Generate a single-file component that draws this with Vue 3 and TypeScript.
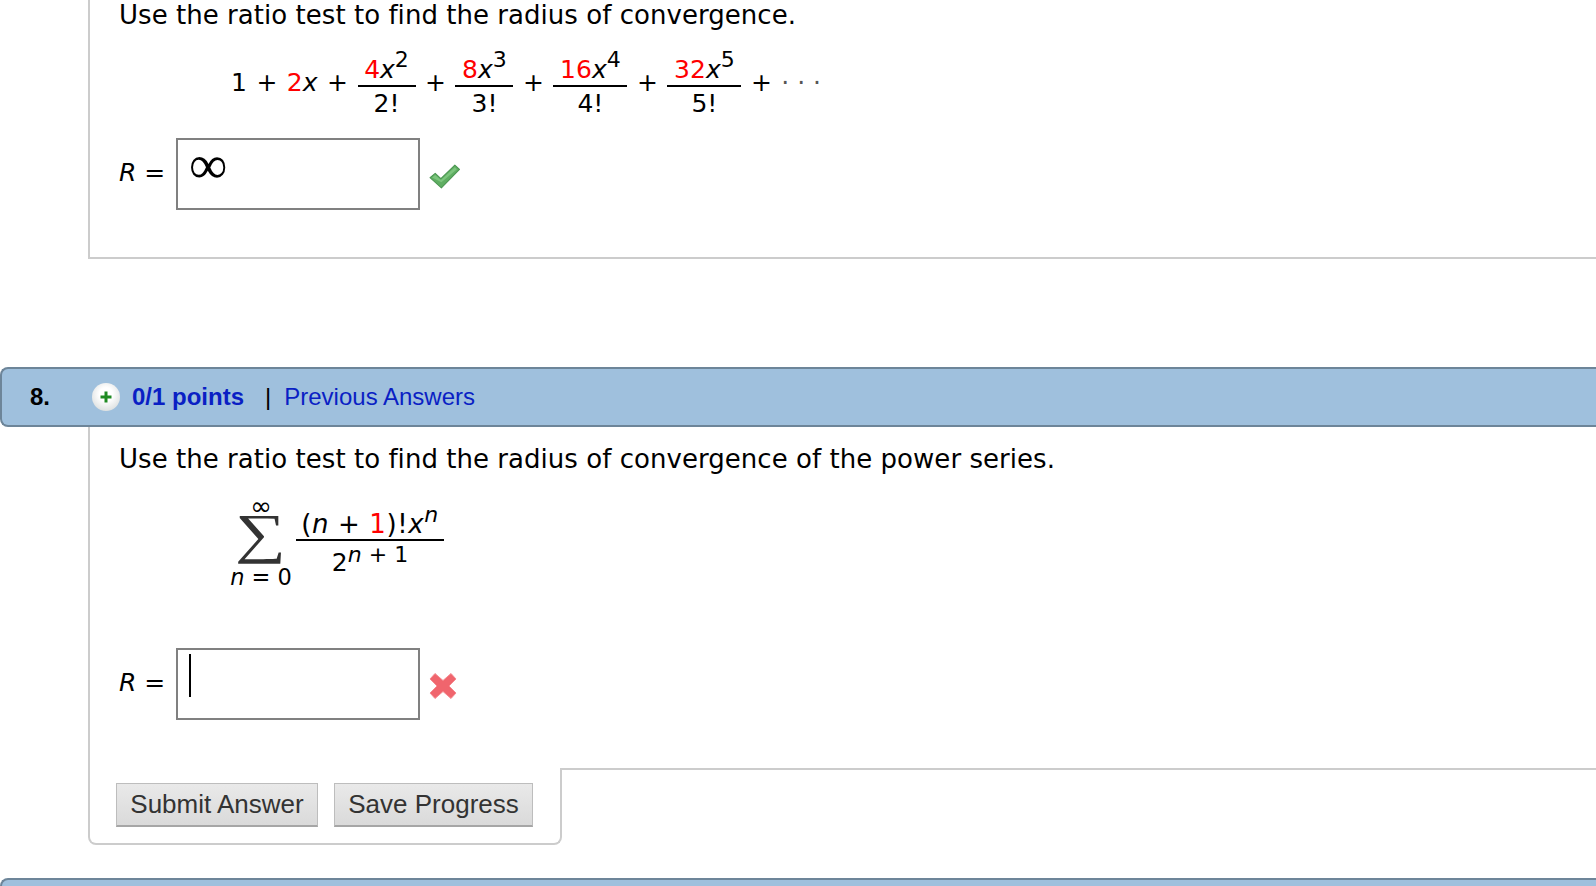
<script setup lang="ts">
interface Term { coef: string; exp: string; den: string; }
const terms: Term[] = [
  { coef: '4', exp: '2', den: '2!' },
  { coef: '8', exp: '3', den: '3!' },
  { coef: '16', exp: '4', den: '4!' },
  { coef: '32', exp: '5', den: '5!' },
];
</script>

<template>
  <div class="page">
    <section class="body first">
      <p class="prompt">Use the ratio test to find the radius of convergence.</p>
      <div class="math series">
        <span>1</span><span class="op">+</span><span><b class="red">2</b><i>x</i></span><span class="op">+</span>
        <template v-for="t in terms" :key="t.exp">
          <span class="frac" :class="'c' + t.coef.length">
            <span class="num"><b class="red">{{ t.coef }}</b><i>x</i><sup>{{ t.exp }}</sup></span>
            <span class="den">{{ t.den }}</span>
          </span>
          <span class="op">+</span>
        </template>
        <span class="dots">· · ·</span>
      </div>
      <div class="answer">
        <span class="math label"><i>R</i> =</span>
        <div class="box"><span class="inf">∞</span></div>
        <svg class="mark check" viewBox="0 0 30 24" width="31" height="25" aria-hidden="true">
          <path d="M1 13 L6 9 L11.5 14 L25 1 L29.5 5 L12 23 Z" fill="#5fae62" stroke="#4a9550" stroke-width="1" stroke-linejoin="round" />
          <path d="M3 13 L6 10.5 L11.5 15.5 L25 3 L27 5 L12 17.5 Z" fill="#7cc57d" />
        </svg>
      </div>
    </section>

    <header class="bar">
      <span class="qnum">8.</span>
      <span class="plus">
        <svg viewBox="0 0 12 12" width="12" height="12" aria-hidden="true"><path d="M4.5 0.5h3v4h4v3h-4v4h-3v-4h-4v-3h4z" fill="#1f8a22" /></svg>
      </span>
      <a class="points">0/1 points</a>
      <span class="sep">|</span>
      <a class="prev">Previous Answers</a>
    </header>

    <section class="second">
      <div class="body content">
        <p class="prompt">Use the ratio test to find the radius of convergence of the power series.</p>
        <div class="math sumrow">
          <span class="sum">
            <span class="sum-top">∞</span>
            <span class="sigma">∑</span>
            <span class="sum-bot"><i>n</i> = 0</span>
          </span>
          <span class="frac bigfrac">
            <span class="num"><span>(<i>n</i> + <b class="red">1</b>)!<i>x</i><sup><i>n</i></sup></span></span>
            <span class="den"><span>2<sup class="high"><i>n</i> + 1</sup></span></span>
          </span>
        </div>
        <div class="answer">
          <span class="math label"><i>R</i> =</span>
          <div class="box"><span class="caret"></span></div>
          <svg class="mark cross" viewBox="0 0 28 28" width="28" height="28" aria-hidden="true">
            <path d="M6 1.5 L14 8.5 L22 1.5 L27 7 L20 14 L27 21 L22 26.5 L14 19.5 L6 26.5 L1 21 L8 14 L1 7 Z" fill="#f0656d" stroke="#f58a90" stroke-width="1" stroke-linejoin="round" />
          </svg>
        </div>
      </div>
      <div class="footer">
        <div class="actions">
          <button class="btn submit" type="button">Submit Answer</button>
          <button class="btn save" type="button">Save Progress</button>
        </div>
        <div class="filler"></div>
      </div>
    </section>

    <div class="bar next"></div>
  </div>
</template>

<style>
html, body { margin: 0; padding: 0; background: #fff; overflow: hidden; }
</style>

<style scoped>
.page {
  width: 1596px;
  height: 886px;
  overflow: hidden;
  background: #fff;
  font-family: "DejaVu Sans", Verdana, sans-serif;
  color: #000;
}
.body {
  margin-left: 88px;
  border-left: 2px solid #ccc;
  padding-left: 29px;
}
.first {
  height: 257px;
  border-bottom: 2px solid #ccc;
  margin-bottom: 108px;
}
.prompt {
  margin: 0;
  font-size: 26px;
  letter-spacing: 0.04px;
  line-height: 30px;
}
.math { font-size: 25px; line-height: 30px; }
.math i { font-style: italic; }
.red { color: #f00; font-weight: normal; }
sup { font-size: 22px; line-height: 0; vertical-align: 11px; }
.series {
  display: flex;
  align-items: center;
  gap: 9.5px;
  margin: 17px 0 0 112px;
  height: 71px;
  white-space: nowrap;
}
.frac {
  display: inline-flex;
  flex-direction: column;
  align-items: center;
}
.series .frac { margin-top: 8px; }
.frac .num {
  border-bottom: 2px solid #000;
  line-height: 30px;
  align-self: stretch;
  text-align: center;
}
.frac .den { line-height: 30px; padding-top: 2px; }
.c1 { width: 58px; }
.c2 { width: 74px; }
.dots { color: #555; }
.answer {
  display: flex;
  align-items: center;
  margin-top: 20px;
}
.label { width: 57px; flex: none; white-space: nowrap; margin-top: -2px; }
.box {
  box-sizing: border-box;
  width: 244px;
  height: 72px;
  border: 2px solid #808080;
  padding: 4px 11px;
  background: #fff;
}
.inf {
  display: block;
  font-family: "Liberation Serif", serif;
  font-size: 54px;
  line-height: 42px;
}
.caret {
  display: block;
  width: 2px;
  height: 43px;
  background: #000;
}
.mark { margin-left: 9px; flex: none; }
.check { margin-top: 4px; }
.cross { margin-top: 4px; }
.bar {
  box-sizing: border-box;
  height: 60px;
  display: flex;
  align-items: center;
  background: #9fc0dd;
  border: 2px solid #6d8599;
  border-right: 0;
  border-radius: 8px 0 0 8px;
  font-family: "Liberation Sans", Arial, sans-serif;
  font-size: 24px;
}
.qnum { width: 62px; margin-left: 28px; font-weight: bold; flex: none; }
.plus {
  width: 28px;
  height: 28px;
  flex: none;
  border-radius: 50%;
  display: flex;
  align-items: center;
  justify-content: center;
  background: radial-gradient(circle at 50% 40%, #fff 30%, #dfe2e2 75%, #b9b9b2 100%);
}
.points { margin-left: 12px; color: #0a1fc4; font-weight: bold; }
.sep { margin-left: 21px; color: #000; }
.prev { margin-left: 13px; color: #0a1fc4; }
.content { padding-top: 17px; padding-bottom: 48px; }
.sumrow {
  display: flex;
  align-items: flex-start;
  margin: 23px 0 0 111px;
  height: 94px;
}
.sum {
  display: flex;
  flex-direction: column;
  align-items: center;
  width: 62px;
  font-size: 22.5px;
}
.sum-top { line-height: 18px; font-size: 26px; }
.sigma {
  font-family: "Liberation Serif", serif;
  font-size: 55px;
  line-height: 48px;
  color: #333;
  margin: -5px 0 5px;
  transform: scaleX(1.3);
}
.sum-bot { line-height: 28px; white-space: nowrap; }
.bigfrac { margin: 12px 0 0 4px; width: 148px; }
.bigfrac .num { font-size: 26px; letter-spacing: 0.6px; }
.bigfrac .den { line-height: 28px; padding-top: 8px; }
.high { font-size: 22px; vertical-align: 9px; }
.content .answer { margin-top: 57px; }
.footer { display: flex; }
.actions {
  box-sizing: border-box;
  margin-left: 88px;
  width: 474px;
  height: 77px;
  flex: none;
  display: flex;
  gap: 16px;
  padding: 15px 0 0 26px;
  border-left: 2px solid #ccc;
  border-right: 2px solid #ccc;
  border-bottom: 2px solid #ccc;
  border-radius: 0 0 8px 8px;
}
.filler { flex: 1; border-top: 2px solid #ccc; }
.btn {
  box-sizing: border-box;
  height: 44px;
  padding: 0;
  font-family: "Liberation Sans", Arial, sans-serif;
  font-size: 26px;
  color: #333;
  background: linear-gradient(#e9e9e9, #dadada);
  border: 1px solid #bdbdbd;
  border-bottom: 2px solid #a6a6a6;
}
.submit { width: 202px; }
.save { width: 199px; }
.next { margin-top: 33px; }
</style>
